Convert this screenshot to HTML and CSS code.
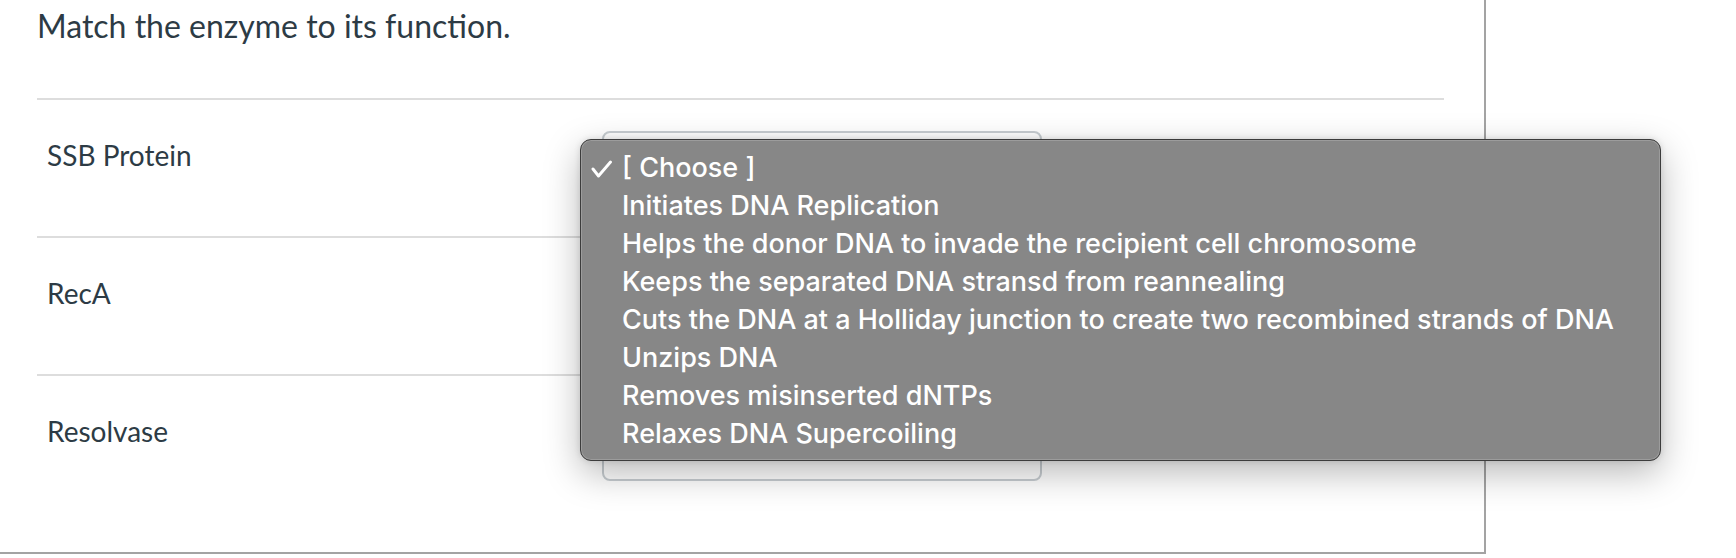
FILE: index.html
```html
<!DOCTYPE html>
<html>
<head>
<meta charset="utf-8">
<link rel="stylesheet" href="styles.css">
</head>
<body>
<div class="page">
  <div class="question">
    <div class="title">Match the enzyme to its function.</div>
    <div class="answers">
      <div class="row">
        <div class="label">SSB Protein</div>
        <div class="select"></div>
      </div>
      <div class="row">
        <div class="label">RecA</div>
        <div class="select"></div>
      </div>
      <div class="row last">
        <div class="label">Resolvase</div>
        <div class="select"></div>
      </div>
    </div>
  </div>
  <div class="menu">
    <div class="item checked"><svg class="check" width="22" height="18" viewBox="0 0 22 18"><polyline points="2,9 7.5,16 19.5,2" fill="none" stroke="#ffffff" stroke-width="2.9" stroke-linecap="round" stroke-linejoin="round"/></svg>[ Choose ]</div>
    <div class="item">Initiates DNA Replication</div>
    <div class="item">Helps the donor DNA to invade the recipient cell chromosome</div>
    <div class="item">Keeps the separated DNA stransd from reannealing</div>
    <div class="item">Cuts the DNA at a Holliday junction to create two recombined strands of DNA</div>
    <div class="item">Unzips DNA</div>
    <div class="item">Removes misinserted dNTPs</div>
    <div class="item">Relaxes DNA Supercoiling</div>
  </div>
</div>
</body>
</html>
```

FILE: styles.css
```css
html, body {
  margin: 0;
  padding: 0;
  background: #ffffff;
}
body {
  width: 1736px;
  height: 558px;
  overflow: hidden;
  position: relative;
}
.page {
  width: 1484px;
  height: 552px;
  border-right: 2px solid #a3a3a3;
  border-bottom: 2px solid #a3a3a3;
}
.question {
  padding-left: 37px;
  width: 1407px;
  font-family: Lato, "Open Sans", sans-serif;
  color: #2d3b45;
}
.title {
  font-size: 32px;
  line-height: 40px;
  padding-top: 6px;
  height: 92px;
  border-bottom: 2px solid #dddddd;
}
.answers {
  display: flex;
  flex-direction: column;
}
.row {
  height: 136px;
  border-bottom: 2px solid #dddddd;
  display: flex;
  align-items: flex-start;
}
.row.last {
  border-bottom: none;
}
.label {
  font-size: 28px;
  line-height: 36px;
  padding-left: 10px;
  padding-top: 37px;
  width: 555px;
}
.select {
  margin-top: 31px;
  width: 436px;
  height: 70px;
  border: 2px solid #c7cdd1;
  border-radius: 8px;
  background: #ffffff;
}
.menu {
  position: absolute;
  left: 580px;
  top: 139px;
  width: 1081px;
  height: 322px;
  box-sizing: border-box;
  padding: 9px 0 0 41px;
  background: #878787;
  border: 1px solid #3c3c3c;
  border-radius: 11px;
  box-shadow: inset 0 0 0 1px rgba(255,255,255,0.18), 0 12px 36px rgba(0,0,0,0.28), 0 0 6px rgba(0,0,0,0.12);
  font-family: Inter, "Noto Sans", sans-serif;
  font-size: 27px;
  font-weight: 500;
  color: #ffffff;
}
.item {
  height: 38px;
  line-height: 38px;
  white-space: nowrap;
  position: relative;
}
.check {
  position: absolute;
  left: -31px;
  top: 11px;
}
```
